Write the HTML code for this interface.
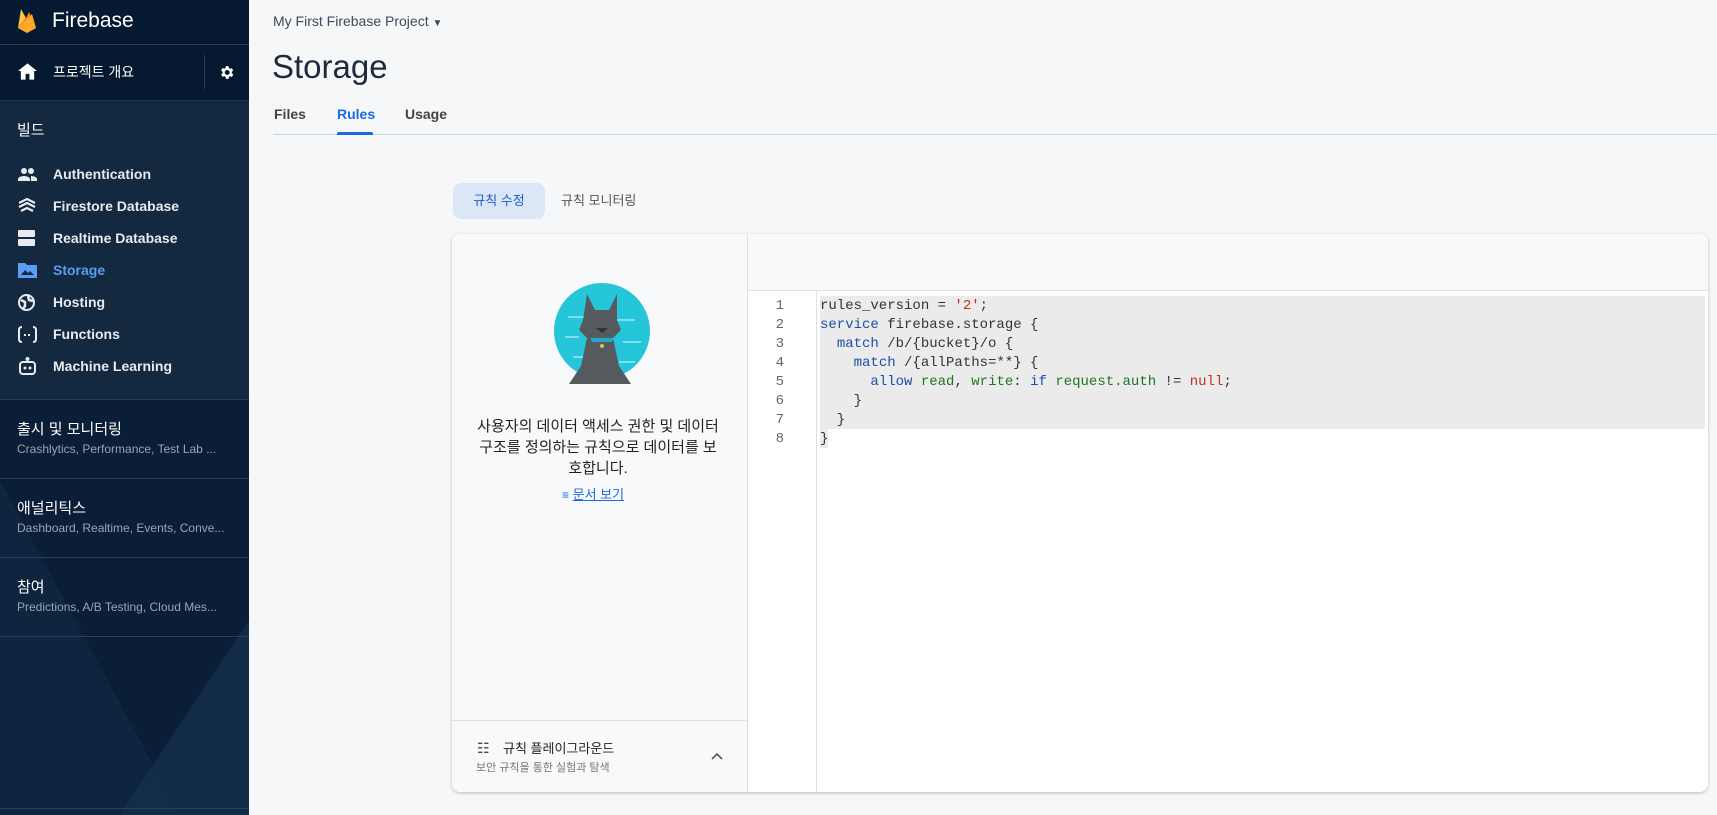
<!DOCTYPE html>
<html><head><meta charset="utf-8"><style>
*{box-sizing:border-box;margin:0;padding:0}
body{width:1717px;height:815px;overflow:hidden;background:#f6f7f9;font-family:"Liberation Sans","Noto Sans CJK KR",sans-serif;position:relative}
.sb{position:absolute;left:0;top:0;width:249px;height:815px;background:#0a1f37;overflow:hidden}
.a{position:absolute}
.w{color:#fff}
.nav{position:absolute;left:0;width:249px;height:32px;display:flex;align-items:center;color:#e8eaed;font-size:14px;font-weight:bold}
.nav svg{position:absolute;left:18px}
.nav span{position:absolute;left:53px}
.sec{position:absolute;left:17px;color:#fff;font-size:15px}
.sub{position:absolute;left:17px;color:#9aa4b1;font-size:12px}
.hr{position:absolute;left:0;width:249px;height:1px;background:#2a3f57}
.code{position:absolute;left:820px;font-family:"Liberation Mono",monospace;font-size:14px;line-height:19px;white-space:pre;color:#333}
.ln{position:absolute;left:748px;width:36px;text-align:right;font-family:"Liberation Mono",monospace;font-size:14px;line-height:19px;color:#666}
.k{color:#1a4fa8}.s{color:#c0321c}.g{color:#207520}
</style></head><body>
<div class="sb">
  <div class="a" style="left:0;top:0;width:249px;height:100px;background:#051a30"></div>
  <div class="a" style="left:0;top:100px;width:249px;height:299px;background:#12293f"></div>
  <svg class="a" style="left:0;top:400px" width="249" height="415"><polygon points="0,80 180,415 0,415" fill="#0e2540"/><polygon points="249,220 120,415 249,415" fill="#14304b" opacity=".8"/></svg>
  <div class="hr" style="top:44px"></div>
  <div class="hr" style="top:100px;background:#1e3550"></div>
  <svg class="a" style="left:17px;top:7px" width="20" height="27" viewBox="0 0 20 27"><path d="M1 21L4 2l5 9z" fill="#ffc24a"/><path d="M1 21L9 11l3-6 7 16-9 5z" fill="#f6820c"/><path d="M1 21l14-14 4 14-9 5z" fill="#fca829"/></svg>
  <div class="a w" style="left:52px;top:9px;font-size:21px">Firebase</div>
  <svg class="a" style="left:18px;top:63px" width="19" height="17" viewBox="0 0 20 17"><path d="M8 17v-6h4v6h5V8h3L10 0 0 8h3v9z" fill="#fff"/></svg>
  <div class="a" style="left:53px;top:62px;color:#fff;font-size:14px">프로젝트 개요</div>
  <div class="a" style="left:204px;top:55px;width:1px;height:34px;background:#2a3f57"></div>
  <svg class="a" style="left:218px;top:64px" width="17" height="17" viewBox="0 0 24 24"><path fill="#fff" d="M19.4 13a7.5 7.5 0 000-2l2.1-1.6-2-3.5-2.5 1a7.6 7.6 0 00-1.7-1L15 3h-4l-.4 2.7a7.6 7.6 0 00-1.7 1l-2.5-1-2 3.5L6.6 11a7.5 7.5 0 000 2l-2.1 1.6 2 3.5 2.5-1a7.6 7.6 0 001.7 1L11 21h4l.4-2.7a7.6 7.6 0 001.7-1l2.5 1 2-3.5zM13 15.5a3.5 3.5 0 110-7 3.5 3.5 0 010 7z"/></svg>
  <div class="sec" style="top:119px">빌드</div>
  <div class="nav" style="top:158px"><svg width="19" height="13" viewBox="0 0 19 13"><circle cx="6" cy="3" r="3" fill="#e8eaed"/><circle cx="13" cy="3" r="3" fill="#e8eaed"/><path d="M0 13v-2c0-2 4-3 6-3s6 1 6 3v2zM13 8c2 0 6 1 6 3v2h-6z" fill="#e8eaed"/></svg><span>Authentication</span></div>
  <div class="nav" style="top:190px"><svg width="18" height="16" viewBox="0 0 18 16"><path d="M1 5l8-4 8 4M1 9l8-4 8 4M3 13l6-3 6 3" stroke="#e8eaed" stroke-width="2.2" fill="none"/></svg><span>Firestore Database</span></div>
  <div class="nav" style="top:222px"><svg width="17" height="16" viewBox="0 0 17 16"><rect x="0" y="0" width="17" height="7" rx="1" fill="#e8eaed"/><rect x="0" y="9" width="17" height="7" rx="1" fill="#e8eaed"/></svg><span>Realtime Database</span></div>
  <div class="nav" style="top:254px;color:#5b9cf6"><svg width="19" height="15" viewBox="0 0 19 15"><path d="M0 0h7l2 2h10v13H0z" fill="#5b9cf6"/><path d="M3 12l4-5 3 3 2-2 4 4z" fill="#12293f"/></svg><span>Storage</span></div>
  <div class="nav" style="top:286px"><svg width="17" height="17" viewBox="0 0 17 17"><circle cx="8.5" cy="8.5" r="7.5" stroke="#e8eaed" stroke-width="2" fill="none"/><path d="M3 6l4 2v4l-2 3M10 2l1 4 4 1" stroke="#e8eaed" stroke-width="2.5" fill="none"/></svg><span>Hosting</span></div>
  <div class="nav" style="top:318px"><svg width="19" height="17" viewBox="0 0 19 17"><path d="M4 1Q1 1 1 4v9q0 3 3 3M15 1q3 0 3 3v9q0 3-3 3" stroke="#e8eaed" stroke-width="2" fill="none"/><path d="M6 9h2M10 9h2" stroke="#e8eaed" stroke-width="2"/></svg><span>Functions</span></div>
  <div class="nav" style="top:350px"><svg width="19" height="18" viewBox="0 0 19 18"><circle cx="9.5" cy="2" r="2" fill="#e8eaed"/><rect x="2" y="5" width="15" height="12" rx="3" stroke="#e8eaed" stroke-width="2" fill="none"/><circle cx="7" cy="11" r="1.5" fill="#e8eaed"/><circle cx="12" cy="11" r="1.5" fill="#e8eaed"/></svg><span>Machine Learning</span></div>
  <div class="hr" style="top:399px"></div>
  <div class="sec" style="top:418px">출시 및 모니터링</div>
  <div class="sub" style="top:442px">Crashlytics, Performance, Test Lab ...</div>
  <div class="hr" style="top:478px"></div>
  <div class="sec" style="top:497px">애널리틱스</div>
  <div class="sub" style="top:521px">Dashboard, Realtime, Events, Conve...</div>
  <div class="hr" style="top:557px"></div>
  <div class="sec" style="top:576px">참여</div>
  <div class="sub" style="top:600px">Predictions, A/B Testing, Cloud Mes...</div>
  <div class="hr" style="top:636px"></div>
  <div class="hr" style="top:808px"></div>
</div>

<div class="a" style="left:273px;top:13px;font-size:14px;color:#3c4a5c">My First Firebase Project <span style="font-size:10px">▼</span></div>
<div class="a" style="left:272px;top:48px;font-size:33px;color:#1d2b3b">Storage</div>
<div class="a" style="left:274px;top:106px;font-size:14px;color:#444;font-weight:bold">Files</div>
<div class="a" style="left:337px;top:106px;font-size:14px;color:#1a6ae0;font-weight:bold">Rules</div>
<div class="a" style="left:405px;top:106px;font-size:14px;color:#444;font-weight:bold">Usage</div>
<div class="a" style="left:273px;top:134px;width:1444px;height:1px;background:#cfd4db"></div>
<div class="a" style="left:337px;top:132px;width:36px;height:3px;background:#1a6ae0;border-radius:2px 2px 0 0"></div>

<div class="a" style="left:453px;top:183px;width:92px;height:36px;background:#dbe7f7;border-radius:8px;color:#1a5dc8;font-size:13px;text-align:center;line-height:36px">규칙 수정</div>
<div class="a" style="left:561px;top:183px;line-height:36px;color:#555;font-size:13px">규칙 모니터링</div>

<div class="a" style="left:452px;top:234px;width:1256px;height:558px;background:#fff;border-radius:8px;box-shadow:0 1px 3px rgba(0,0,0,.25);overflow:hidden">
  <div class="a" style="left:0;top:0;width:296px;height:558px;background:#f8f9fa;border-right:1px solid #e0e0e0"></div>
  <div class="a" style="left:296px;top:0;width:960px;height:57px;background:#f8f9fa;border-bottom:1px solid #e0e0e0"></div>
  <div class="a" style="left:364px;top:57px;width:1px;height:501px;background:#e0e0e0"></div>
  <div class="a" style="left:0;top:486px;width:296px;height:1px;background:#e0e0e0"></div>
</div>
<svg class="a" style="left:553px;top:282px" width="98" height="110" viewBox="0 0 98 110">
  <ellipse cx="49" cy="49" rx="48" ry="48" fill="#26c6da"/>
  <g stroke="#7fe0ec" stroke-width="2"><path d="M15 35h18M62 38h20M12 55h14M70 60h18M20 75h10M66 80h16"/></g>
  <path d="M34 12l8 16h14l8-16 0 26 4 10-8 8 6 28 12 18H16l12-18 6-28-8-8 4-10z" fill="#555a5e"/>
  <path d="M37 56h24l-2 4H39z" fill="#26a6c6"/><circle cx="49" cy="64" r="2" fill="#e8c040"/>
  <path d="M43 46h12l-6 5z" fill="#333"/>
</svg>
<div class="a" style="left:474px;top:416px;width:248px;text-align:center;font-size:15px;line-height:21px;color:#222">사용자의 데이터 액세스 권한 및 데이터 구조를 정의하는 규칙으로 데이터를 보호합니다.</div>
<div class="a" style="left:562px;top:484px;font-size:13px;color:#1a6ae0"><span style="font-size:12px">≡</span> <u>문서 보기</u></div>
<div class="a" style="left:477px;top:740px;font-size:14px;color:#444">☷</div>
<div class="a" style="left:503px;top:738px;font-size:13px;color:#222">규칙 플레이그라운드</div>
<div class="a" style="left:476px;top:759px;font-size:11px;color:#777">보안 규칙을 통한 실험과 탐색</div>
<svg class="a" style="left:711px;top:752px" width="12" height="8"><path d="M1 7l5-5 5 5" stroke="#555" stroke-width="1.6" fill="none"/></svg>

<div class="a" style="left:820px;top:296px;width:885px;height:133px;background:#ebebeb"></div>
<div class="a" style="left:820px;top:429px;width:8px;height:19px;background:#ebebeb"></div>
<div class="ln" style="top:297px">1<br>2<br>3<br>4<br>5<br>6<br>7<br>8</div>
<div class="code" style="top:297px">rules_version = <span class="s">'2'</span>;
<span class="k">service</span> firebase.storage {
  <span class="k">match</span> /b/{bucket}/o {
    <span class="k">match</span> /{allPaths=**} {
      <span class="k">allow</span> <span class="g">read</span>, <span class="g">write</span>: <span class="k">if</span> <span class="g">request.auth</span> != <span class="s">null</span>;
    }
  }
}</div>
</body></html>
